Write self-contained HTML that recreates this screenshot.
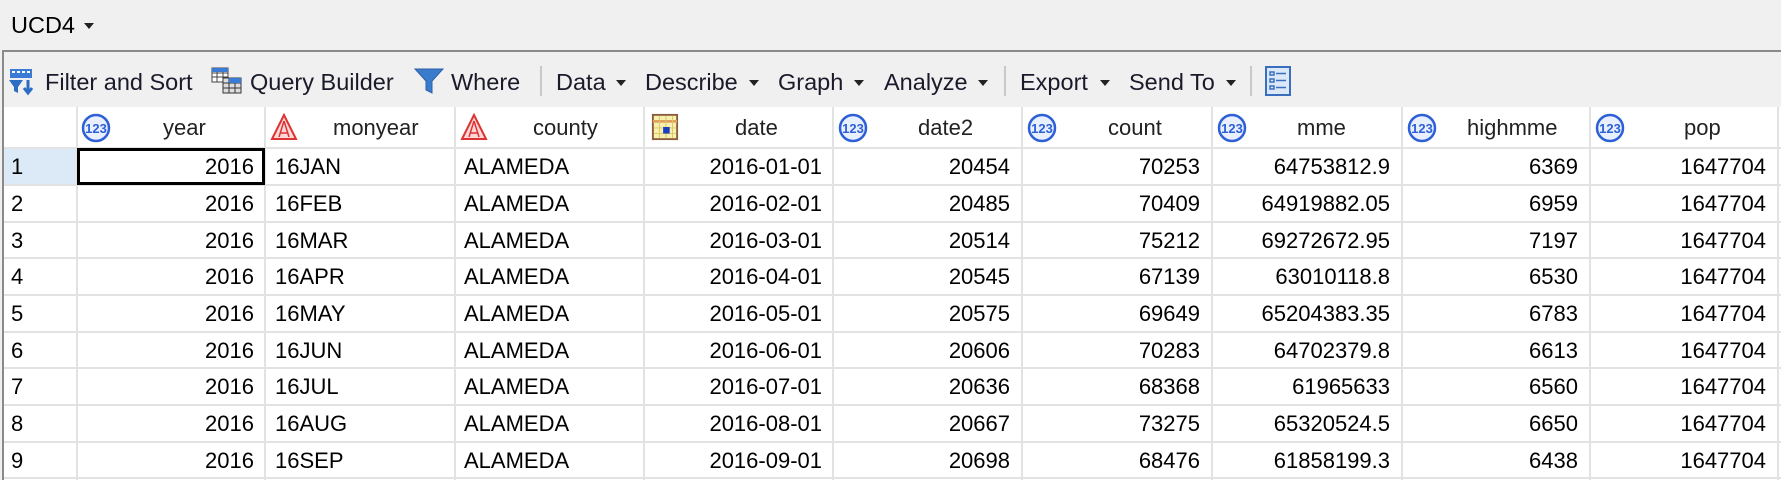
<!DOCTYPE html>
<html><head><meta charset="utf-8"><style>
*{margin:0;padding:0;box-sizing:border-box}
body{width:1781px;height:480px;overflow:hidden;background:#f0f0f0;font-family:"Liberation Sans",Arial,sans-serif;color:#000;position:relative}
.abs{position:absolute}
.tb{position:absolute;top:69px;font-size:23.5px;line-height:26px;white-space:nowrap;color:#1a1a2a}
.dd{position:absolute;top:80px;width:0;height:0;border-left:5px solid transparent;border-right:5px solid transparent;border-top:6px solid #222}
.sep{position:absolute;top:66px;width:2px;height:30px;background:#c8c8c8}
.grid{position:absolute;left:4px;top:107px;width:1777px;height:373px;background:#fff}
.vl{position:absolute;top:107px;width:2px;height:373px;background:#e2e2e2}
.hl{position:absolute;left:4px;width:1777px;height:2px;background:#e2e2e2}
.c{position:absolute;font-size:22px;line-height:24px;white-space:nowrap}
.r{text-align:right}
.h{position:absolute;top:116px;font-size:22px;line-height:24px;color:#222}
</style></head><body>
<div class="abs" style="left:11px;top:12px;font-size:23.5px;line-height:26px">UCD4</div>
<div class="abs" style="left:84px;top:23px;border-left:5px solid transparent;border-right:5px solid transparent;border-top:6px solid #222"></div>
<div class="abs" style="left:2px;top:50px;width:1779px;height:2px;background:#8a8a8a"></div>
<div class="abs" style="left:2px;top:50px;width:2px;height:430px;background:#8a8a8a"></div>

<svg class="abs" style="left:8px;top:68px" width="28" height="28" viewBox="0 0 28 28">
<rect x="2" y="1" width="22" height="9" fill="#3a7bd5"/><g fill="#fff"><rect x="4" y="3" width="3" height="2"/><rect x="9" y="3" width="3" height="2"/><rect x="14" y="3" width="3" height="2"/><rect x="19" y="3" width="3" height="2"/></g>
<path d="M1 12h14l-5 7v6l-4-2v-4z" fill="#2b6cc4"/><path d="M20 12v12M16 20l4 5 4-5" stroke="#2b6cc4" stroke-width="3" fill="none"/></svg>
<div class="tb" style="left:45px">Filter and Sort</div>
<svg class="abs" style="left:211px;top:67px" width="32" height="28" viewBox="0 0 32 28">
<rect x="1" y="1" width="16" height="14" fill="#fff" stroke="#444"/><path d="M1 6h16M1 10h16M6 1v14M12 1v14" stroke="#444"/>
<rect x="1" y="1" width="16" height="4" fill="#3a7bd5"/>
<rect x="12" y="11" width="18" height="15" fill="#ddd" stroke="#333"/><path d="M12 16h18M12 21h18M18 11v15M24 11v15" stroke="#333"/><rect x="18" y="11" width="12" height="5" fill="#3a7bd5"/></svg>
<div class="tb" style="left:250px">Query Builder</div>
<svg class="abs" style="left:414px;top:67px" width="30" height="28" viewBox="0 0 30 28"><path d="M1 2h28l-11 12v12l-6-3v-9z" fill="#3a7ccc" stroke="#2a5fa8"/></svg>
<div class="tb" style="left:451px">Where</div>
<div class="sep" style="left:540px"></div>
<div class="tb" style="left:556px">Data</div><div class="dd" style="left:616px"></div>
<div class="tb" style="left:645px">Describe</div><div class="dd" style="left:749px"></div>
<div class="tb" style="left:778px">Graph</div><div class="dd" style="left:854px"></div>
<div class="tb" style="left:884px">Analyze</div><div class="dd" style="left:978px"></div>
<div class="sep" style="left:1004px"></div>
<div class="tb" style="left:1020px">Export</div><div class="dd" style="left:1100px"></div>
<div class="tb" style="left:1129px">Send To</div><div class="dd" style="left:1226px"></div>
<div class="sep" style="left:1250px"></div>
<svg class="abs" style="left:1265px;top:66px" width="26" height="30" viewBox="0 0 26 30"><rect x="1" y="1" width="24" height="28" fill="#dbe8f8" stroke="#3a6fc0" stroke-width="2"/><g fill="none" stroke="#3a6fc0" stroke-width="1.5"><rect x="5" y="6" width="4" height="3"/><rect x="5" y="13" width="4" height="3"/><rect x="5" y="20" width="4" height="3"/><path d="M11 7.5h10M11 14.5h10M11 21.5h10"/></g></svg>

<div class="grid"></div>
<div class="abs" style="left:4px;top:148px;width:73px;height:37px;background:#dce9f6"></div>
<div class="vl" style="left:76px"></div><div class="vl" style="left:264px"></div><div class="vl" style="left:454px"></div><div class="vl" style="left:643px"></div><div class="vl" style="left:832px"></div><div class="vl" style="left:1021px"></div><div class="vl" style="left:1211px"></div><div class="vl" style="left:1401px"></div><div class="vl" style="left:1589px"></div><div class="vl" style="left:1777px"></div>
<div class="hl" style="top:147px"></div><div class="hl" style="top:184px"></div><div class="hl" style="top:221px"></div><div class="hl" style="top:257px"></div><div class="hl" style="top:294px"></div><div class="hl" style="top:331px"></div><div class="hl" style="top:367px"></div><div class="hl" style="top:404px"></div><div class="hl" style="top:441px"></div><div class="hl" style="top:477px"></div>

<svg width="0" height="0" style="position:absolute"><defs>
<symbol id="num" viewBox="0 0 30 30"><circle cx="15" cy="15" r="13" fill="#e8f0ff" stroke="#2d5fd6" stroke-width="2.5"/><text x="15" y="20" font-size="13" font-family="Liberation Sans" fill="#2d5fd6" text-anchor="middle" font-weight="bold">123</text></symbol>
<symbol id="chr" viewBox="0 0 30 30"><path d="M15 2L3 26h24z" fill="#ffd8d8" stroke="#d33" stroke-width="2"/><path d="M15 8l-5 16M15 8l5 16M11 20h8" stroke="#d33" stroke-width="1.5" fill="none"/></symbol>
<symbol id="dt" viewBox="0 0 30 30"><rect x="2" y="2" width="26" height="26" fill="#f7f0b0" stroke="#8a5a3a" stroke-width="2"/><path d="M2 9h26" stroke="#e0a060" stroke-width="3"/><path d="M9 3v24M16 3v24M23 3v24M3 16h24M3 22h24" stroke="#d8c860" stroke-width="1"/><rect x="13" y="15" width="7" height="7" fill="#1a3fc0"/></symbol>
</defs></svg>
<svg class="abs" style="left:81px;top:113px" width="30" height="30"><use href="#num"/></svg>
<svg class="abs" style="left:269px;top:113px" width="30" height="30"><use href="#chr"/></svg>
<svg class="abs" style="left:459px;top:113px" width="30" height="30"><use href="#chr"/></svg>
<svg class="abs" style="left:651px;top:113px" width="28" height="28"><use href="#dt"/></svg>
<svg class="abs" style="left:838px;top:113px" width="30" height="30"><use href="#num"/></svg>
<svg class="abs" style="left:1027px;top:113px" width="30" height="30"><use href="#num"/></svg>
<svg class="abs" style="left:1217px;top:113px" width="30" height="30"><use href="#num"/></svg>
<svg class="abs" style="left:1407px;top:113px" width="30" height="30"><use href="#num"/></svg>
<svg class="abs" style="left:1595px;top:113px" width="30" height="30"><use href="#num"/></svg>
<div class="h" style="left:163px">year</div>
<div class="h" style="left:333px">monyear</div>
<div class="h" style="left:533px">county</div>
<div class="h" style="left:735px">date</div>
<div class="h" style="left:918px">date2</div>
<div class="h" style="left:1108px">count</div>
<div class="h" style="left:1297px">mme</div>
<div class="h" style="left:1467px">highmme</div>
<div class="h" style="left:1684px">pop</div>

<div id="rows"></div>
<div class="abs" style="left:77px;top:148px;width:188px;height:37px;border:3px solid #000"></div>
<script>
var d=[["16JAN","2016-01-01",20454,70253,"64753812.9",6369],["16FEB","2016-02-01",20485,70409,"64919882.05",6959],["16MAR","2016-03-01",20514,75212,"69272672.95",7197],["16APR","2016-04-01",20545,67139,"63010118.8",6530],["16MAY","2016-05-01",20575,69649,"65204383.35",6783],["16JUN","2016-06-01",20606,70283,"64702379.8",6613],["16JUL","2016-07-01",20636,68368,"61965633",6560],["16AUG","2016-08-01",20667,73275,"65320524.5",6650],["16SEP","2016-09-01",20698,68476,"61858199.3",6438]];
var tops=[148,185,222,258,295,332,368,405,442];
var rights=[265,null,null,833,1021,1211,1401,1589,1777];
var h="";
d.forEach(function(r,i){var t=tops[i]+7;
h+='<div class="c" style="left:11px;top:'+t+'px">'+(i+1)+'</div>';
var vals=["2016",null,null,r[1],r[2],r[3],r[4],r[5],"1647704"];
vals.forEach(function(v,j){if(v===null)return;h+='<div class="c r" style="right:'+(1781-rights[j]+11)+'px;top:'+t+'px">'+v+'</div>';});
h+='<div class="c" style="left:275px;top:'+t+'px">'+r[0]+'</div>';
h+='<div class="c" style="left:464px;top:'+t+'px">ALAMEDA</div>';
});
document.getElementById("rows").innerHTML=h;
</script>
</body></html>
